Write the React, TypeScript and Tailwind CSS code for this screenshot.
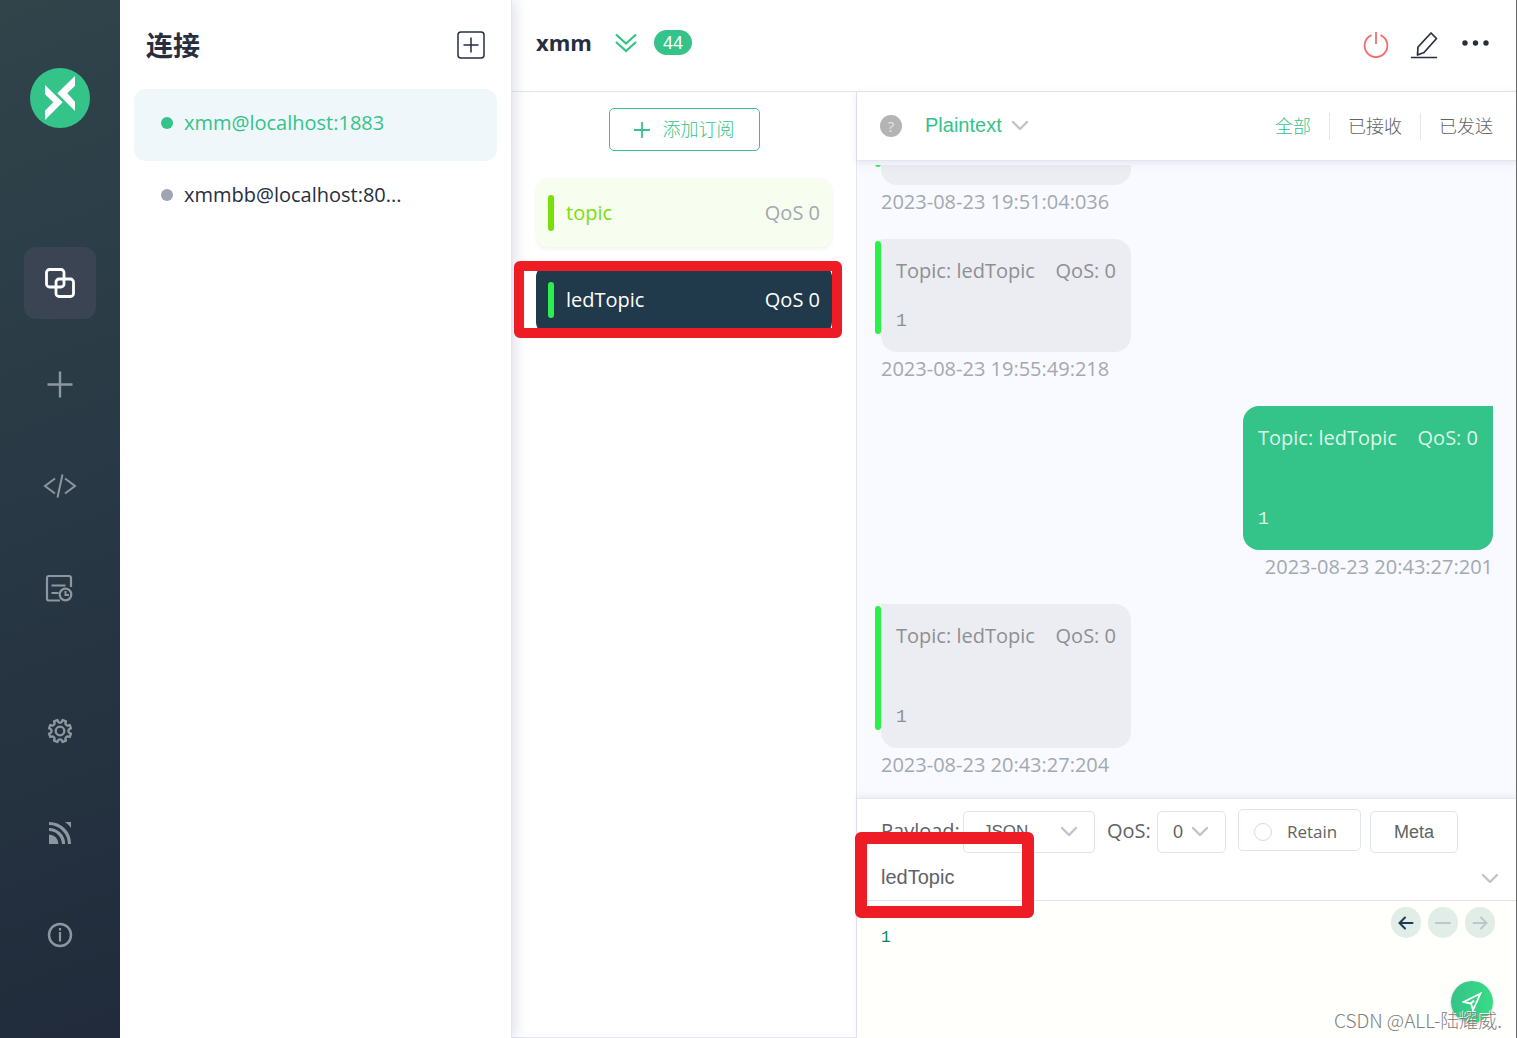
import type { ReactNode } from 'react'

const connections = [
  { name: 'xmm@localhost:1883', online: true },
  { name: 'xmmbb@localhost:80...', online: false },
]

const messages = [
  { time: '2023-08-23 19:51:04:036', topic: '', sent: false, tall: false },
  { time: '2023-08-23 19:55:49:218', topic: 'ledTopic', sent: false, tall: false },
  { time: '2023-08-23 20:43:27:201', topic: 'ledTopic', sent: true, tall: true },
  { time: '2023-08-23 20:43:27:204', topic: 'ledTopic', sent: false, tall: true },
]

function Chevron({ className = '' }: { className?: string }) {
  return (
    <svg
      width="18"
      height="12"
      viewBox="0 0 18 12"
      fill="none"
      stroke="#c0c4cc"
      strokeWidth="2.4"
      strokeLinecap="round"
      strokeLinejoin="round"
      className={className}
    >
      <path d="M2 2l7 7 7-7" />
    </svg>
  )
}

function NavButton({ label, active = false, children }: { label: string; active?: boolean; children: ReactNode }) {
  return (
    <button
      type="button"
      aria-label={label}
      className={`flex size-[72px] items-center justify-center rounded-xl ${active ? 'bg-[#3a4452] text-white' : 'text-[#8d979f]'}`}
    >
      <svg width="34" height="34" viewBox="0 0 34 34" fill="none" stroke="currentColor" strokeWidth="2">
        {children}
      </svg>
    </button>
  )
}

function Sidebar() {
  return (
    <nav className="relative z-20 flex w-[120px] shrink-0 flex-col items-center justify-between bg-[linear-gradient(160deg,#30444a_0%,#293945_45%,#212b3b_100%)] pt-[68px] pb-[67px]">
      <div className="flex flex-col items-center">
        <svg width="60" height="60" viewBox="0 0 60 60" className="mb-[119px]">
          <circle cx="30" cy="30" r="30" fill="#34c388" />
          <path d="M15 17l17.700 17.300L15 52v-9.300l8.300-8.400-8.300-8z" fill="#fff" />
          <path d="M45 8L27.300 25.300 45 43v-9.300l-7.700-8.400L45 17.700z" fill="#fff" />
        </svg>
        <div className="flex flex-col gap-[30px]">
          <NavButton label="连接" active>
            <rect x="3.500" y="3.500" width="17.500" height="17.500" rx="3" strokeWidth="2.800" />
            <rect x="13" y="13" width="17.500" height="17.500" rx="3" strokeWidth="2.800" />
          </NavButton>
          <NavButton label="新建">
            <path d="M17 3.500v26M4.500 16.500h25" strokeWidth="2.400" />
          </NavButton>
          <NavButton label="脚本">
            <path d="M12 8.500L2 16l10 7.500M22 8.500L32 16l-10 7.500M19.500 4.500l-5 23" />
          </NavButton>
          <NavButton label="日志">
            <path d="M28 15V6a2 2 0 0 0-2-2H6a2 2 0 0 0-2 2V26.500a2 2 0 0 0 2 2h11M8.500 13.500h14M8.500 21h7" strokeWidth="2.200" />
            <circle cx="22.500" cy="22.500" r="5.800" strokeWidth="2.200" />
            <path d="M22.500 19V23h3.500" />
          </NavButton>
        </div>
      </div>
      <div className="flex flex-col gap-[30px]">
        <NavButton label="设置">
          <g transform="translate(17 17)">
            <circle r="4.300" strokeWidth="2.300" />
            <path
              strokeWidth="2.300"
              strokeLinejoin="round"
              d="M-1.500-8.700Q0-7.900 1.500-8.700L2.600-11 6-9.600 5.300-7.300Q6.100-5.900 7.500-5.300L9.700-6 11-2.700 8.800-1.500Q8 0 8.800 1.500L11 2.700 9.700 6 7.500 5.300Q6 6 5.300 7.400L6 9.600 2.600 11 1.500 8.700Q0 8-1.500 8.700L-2.600 11-6 9.600-5.300 7.400Q-6 6-7.500 5.300L-9.700 6-11 2.700-8.800 1.500Q-8 0-8.800-1.500L-11-2.700-9.700-6-7.500-5.300Q-6.100-5.900-5.300-7.300L-6-9.600-2.600-11z"
            />
          </g>
        </NavButton>
        <NavButton label="订阅">
          <path d="M6 18.500A9.500 9.500 0 0 1 15.500 28H6zM22 6h6v6A22 22 0 0 0 22 6z" fill="currentColor" stroke="none" />
          <path d="M6 13.500A14.500 14.500 0 0 1 20.500 28M6 7.500A20.500 20.500 0 0 1 26.500 28" strokeWidth="3.200" />
        </NavButton>
        <NavButton label="关于">
          <circle cx="17" cy="17" r="11" strokeWidth="2.500" />
          <path d="M17 14v9.500M17 10v2.500" strokeWidth="2.200" />
        </NavButton>
      </div>
    </nav>
  )
}

function ConnectionList() {
  return (
    <aside className="relative z-10 w-[392px] shrink-0 border-r border-[#e4e6ee] bg-white px-[14px] shadow-[2px_0_14px_rgba(120,130,170,0.28)]">
      <header className="flex h-[89px] items-center justify-between px-3">
        <h1 className="pt-1 text-[27px] font-bold text-[#262e40]">连接</h1>
        <button type="button" aria-label="新建连接">
          <svg width="28" height="28" viewBox="0 0 28 28" fill="none" stroke="#262e40" strokeWidth="1.500">
            <rect x="1" y="1" width="26" height="26" rx="3" />
            <path d="M14 6.500v15M6.500 14h15" />
          </svg>
        </button>
      </header>
      <ul>
        {connections.map(({ name, online }) => (
          <li
            key={name}
            className={`flex h-[72px] items-center gap-[11px] rounded-xl pb-1 pl-[27px] text-[20px] font-medium ${online ? 'bg-[#f0f7fb] text-[#34c388]' : 'text-[#262e40]'}`}
          >
            <span className={`size-3 rounded-full ${online ? 'bg-[#34c388]' : 'bg-[#a0a4b3]'}`} />
            {name}
          </li>
        ))}
      </ul>
    </aside>
  )
}

function TopBar() {
  return (
    <header className="flex h-[92px] shrink-0 items-center justify-between border-b border-[#e4e6ee] pr-[26px] pb-1.5 pl-6">
      <div className="flex items-center">
        <h2 className="text-[22px] font-bold text-[#262e40]">xmm</h2>
        <svg width="22" height="20" viewBox="0 0 22 20" fill="none" stroke="#34c388" strokeWidth="2.200" className="ml-[23px]">
          <path d="M1 1.500l10 9 10-9M1 9l10 9L21 9" />
        </svg>
        <span className="ml-[17px] flex h-[25px] w-[38px] items-center justify-center rounded-full bg-[#34c388] pt-0.5 font-['Liberation_Sans'] text-[18px] text-white">
          44
        </span>
      </div>
      <div className="flex items-center gap-[22px] pt-1">
        <button type="button" aria-label="断开连接">
          <svg width="28" height="28" viewBox="0 0 28 28" fill="none" stroke="#f56c6c" strokeWidth="1.800">
            <path d="M14 1v12M9.500 4.200a11.400 11.400 0 1 0 9 0" />
          </svg>
        </button>
        <button type="button" aria-label="编辑">
          <svg
            width="28"
            height="28"
            viewBox="2 0 28 28"
            fill="none"
            stroke="#262e40"
            strokeWidth="1.700"
            strokeLinejoin="round"
            className="overflow-visible"
          >
            <path d="M7.500 24l.5-8L21 2l5.500 5.500L14 21.500zM1 26.500h26" />
          </svg>
        </button>
        <button type="button" aria-label="更多">
          <svg width="28" height="28" viewBox="0 0 28 28" fill="#262e40">
            <circle cx="3" cy="12" r="2.700" />
            <circle cx="13.500" cy="12" r="2.700" />
            <circle cx="24" cy="12" r="2.700" />
          </svg>
        </button>
      </div>
    </header>
  )
}

function Subscriptions() {
  return (
    <section className="w-[345px] shrink-0 border-r border-b border-[#e4e6ee] px-6 pt-4">
      <button
        type="button"
        className="mx-auto flex h-[43px] w-[151px] items-center justify-center gap-[13px] rounded-[5px] border border-[#34c388] text-[18px] font-light text-[#34c388]"
      >
        <svg width="16" height="16" viewBox="0 0 16 16" stroke="currentColor" strokeWidth="1.800">
          <path d="M8 0v16M0 8h16" />
        </svg>
        添加订阅
      </button>
      <div className="mt-[27px] flex h-[69px] items-center rounded-xl bg-[#f7fdef] px-3 text-[20px] shadow-[0_2px_4px_rgba(0,0,0,0.06)]">
        <span className="h-9 w-1.5 rounded-full bg-[#78e009]" />
        <span className="ml-3 grow text-[#78e009]">topic</span>
        <span className="text-[#a2a9b0]">QoS 0</span>
      </div>
      <div className="relative mt-[18px] flex h-[69px] items-center rounded-xl bg-[#20394b] px-3 text-[20px] text-white">
        <span className="h-9 w-1.5 rounded-full bg-[#2af04b]" />
        <span className="ml-3 grow">ledTopic</span>
        <span>QoS 0</span>
        {/* highlight frame */}
        <span className="absolute -inset-y-1 -right-[10px] -left-[22px] z-20 rounded-md border-10 border-[#ee1c24]" />
      </div>
    </section>
  )
}

function Message({ time, topic, sent, tall }: { time: string; topic: string; sent: boolean; tall: boolean }) {
  return (
    <li className={`flex shrink-0 flex-col ${sent ? 'items-end' : 'items-start'}`}>
      <div
        className={`relative flex w-[250px] flex-col justify-between rounded-2xl px-[15px] pt-[17px] pb-4 text-[20px] leading-[30px] ${tall ? 'h-36' : 'h-[113px]'} ${sent ? 'rounded-tr-none bg-[#34c388] text-[#dcf6ea]' : 'rounded-tl-none bg-[#ecedf2] text-[#8e8f93]'}`}
      >
        {!sent && <span className="absolute top-0.5 bottom-[18px] -left-1.5 w-1.5 rounded-[3px] bg-[#2af04b]" />}
        {topic && (
          <>
            <div className="flex justify-between whitespace-nowrap">
              <span>Topic: {topic}</span>
              <span>QoS: 0</span>
            </div>
            <pre className="font-['Liberation_Mono'] text-[18px]">1</pre>
          </>
        )}
      </div>
      <time className="h-[34px] text-[20px] leading-[34px] text-[#a2a9b0]">{time}</time>
    </li>
  )
}

function MessageFilter() {
  return (
    <div className="relative z-10 flex h-[69px] shrink-0 items-center justify-between border-b border-[#e4e6ee] bg-white pr-[23px] pl-[23px] shadow-[0_2px_8px_rgba(100,110,150,0.15)]">
      <div className="flex items-center">
        <span className="flex size-[22px] items-center justify-center rounded-full bg-[#b4b4b4] text-[15px] text-[#e4e4e4]">?</span>
        <label className="relative ml-[23px] flex items-center">
          <select
            aria-label="格式"
            className="w-[104px] appearance-none bg-transparent pb-0.5 font-['Liberation_Sans'] text-[20px] text-[#34c388]"
          >
            <option>Plaintext</option>
          </select>
          <Chevron className="pointer-events-none absolute right-0" />
        </label>
      </div>
      <div className="flex items-center text-[18px] font-light text-[#606266]">
        <button type="button" className="pr-[18px] text-[#34c388]">全部</button>
        <button type="button" className="border-l border-[#e4e6ee] px-[18px]">已接收</button>
        <button type="button" className="border-l border-[#e4e6ee] pl-[18px]">已发送</button>
      </div>
    </div>
  )
}

function Composer() {
  return (
    <footer className="relative z-10 flex h-60 shrink-0 flex-col border-t border-[#e4e6ee] bg-white shadow-[0_-2px_6px_rgba(100,110,150,0.1)]">
      <div className="flex h-[66px] shrink-0 items-center pl-6 text-[#606266]">
        <label htmlFor="payload" className="w-[82px] pb-0.5 text-[20px] whitespace-nowrap">Payload:</label>
        <div className="relative flex items-center">
          <select id="payload" className="h-[42px] w-[132px] appearance-none rounded-[5px] border border-[#e0e3ee] pl-[19px] font-['Liberation_Sans'] text-[17px]">
            <option>JSON</option>
          </select>
          <Chevron className="pointer-events-none absolute right-[17px]" />
        </div>
        <label htmlFor="qos" className="ml-3 w-[50px] pb-0.5 text-[20px]">QoS:</label>
        <div className="relative flex items-center">
          <select id="qos" className="h-[42px] w-[69px] appearance-none rounded-[5px] border border-[#e0e3ee] pl-[15px] font-['Liberation_Sans'] text-[18px]">
            <option>0</option>
          </select>
          <Chevron className="pointer-events-none absolute right-[17px]" />
        </div>
        <label className="mb-1 ml-3 flex h-[42px] w-[123px] items-center gap-[15px] rounded-[5px] border border-[#e0e3ee] pt-1 pl-[15px] text-[17px]">
          <input type="radio" className="size-[18px] appearance-none rounded-full border border-[#d8dbe6]" />
          Retain
        </label>
        <button type="button" className="ml-[9px] h-[42px] w-[88px] rounded-[5px] border border-[#e0e3ee] font-['Liberation_Sans'] text-[18px]">
          Meta
        </button>
      </div>
      <div className="flex h-9 shrink-0 items-center border-b border-[#e0e3ee] pr-[17px] pb-3 pl-6">
        <input
          aria-label="Topic"
          defaultValue="ledTopic"
          className="w-full grow font-['Liberation_Sans'] text-[20px] text-[#606266] outline-none"
        />
        <Chevron className="mt-1 shrink-0" />
      </div>
      {/* highlight frame */}
      <span className="pointer-events-none absolute top-[33px] -left-0.5 z-10 h-[86px] w-[179px] rounded-md border-12 border-[#ee1c24]" />
      <div className="relative flex grow items-start justify-between bg-[#fffffc] pl-6">
        <textarea
          aria-label="Payload"
          defaultValue="1"
          className="h-[120px] grow resize-none bg-transparent pt-[25px] font-['Liberation_Mono'] text-[16px] leading-6 text-[#098658] outline-none"
        />
        <div className="flex gap-[7px] pt-1.5 pr-[21px]">
          <button type="button" aria-label="上一条" className="flex h-[31px] w-[30px] items-center justify-center rounded-full bg-[#e0eee7]">
            <svg width="16" height="14" viewBox="0 0 16 14" fill="none" stroke="#1f3a56" strokeWidth="2" strokeLinecap="round">
              <path d="M14.500 7H2M7 1.500L1.500 7 7 12.500" />
            </svg>
          </button>
          <button type="button" aria-label="清除" className="flex h-[31px] w-[30px] items-center justify-center rounded-full bg-[#e0eee7]">
            <svg width="16" height="14" viewBox="0 0 16 14" stroke="#c0c4cc" strokeWidth="2" strokeLinecap="round">
              <path d="M1 7h14" />
            </svg>
          </button>
          <button type="button" aria-label="下一条" className="flex h-[31px] w-[30px] items-center justify-center rounded-full bg-[#e0eee7]">
            <svg width="16" height="14" viewBox="0 0 16 14" fill="none" stroke="#c0c4cc" strokeWidth="2" strokeLinecap="round">
              <path d="M1.500 7H14M9 1.500L14.500 7 9 12.500" />
            </svg>
          </button>
        </div>
        <button
          type="button"
          aria-label="发送"
          className="absolute right-[23px] bottom-[15px] flex size-[42px] items-center justify-center rounded-full bg-gradient-to-r from-[#34c388] to-[#38dc86] shadow-[0_1px_3px_rgba(0,0,0,0.25)]"
        >
          <svg width="20" height="20" viewBox="0 0 20 20" fill="none" stroke="#fff" strokeWidth="1.800">
            <path d="M18.500 1.500L1.500 10l7.500 1.500 2 6.500z M9 11.500l3-3" />
          </svg>
        </button>
        <span className="pointer-events-none absolute right-[14px] bottom-1 font-['Noto_Sans_CJK_SC',sans-serif] text-[19px] font-light whitespace-nowrap text-[#808080] [text-shadow:-1px_-1px_0_#fff]">
          CSDN @ALL-陆耀威.
        </span>
      </div>
    </footer>
  )
}

export default function App() {
  return (
    <div className="flex h-screen overflow-hidden bg-white font-['Open_Sans','Noto_Sans_CJK_SC',sans-serif]">
      <Sidebar />
      <ConnectionList />
      <main className="flex min-w-0 grow flex-col border-r border-[#6b6b6b]">
        <TopBar />
        <div className="flex min-h-0 grow">
          <Subscriptions />
          <section className="flex min-w-0 grow flex-col bg-[#f9faff]">
            <MessageFilter />
            <ul className="mt-1 flex min-h-0 grow flex-col justify-end gap-5 overflow-hidden pr-[23px] pb-4 pl-6">
              {messages.map((message) => (
                <Message key={message.time} {...message} />
              ))}
            </ul>
            <Composer />
          </section>
        </div>
      </main>
    </div>
  )
}
